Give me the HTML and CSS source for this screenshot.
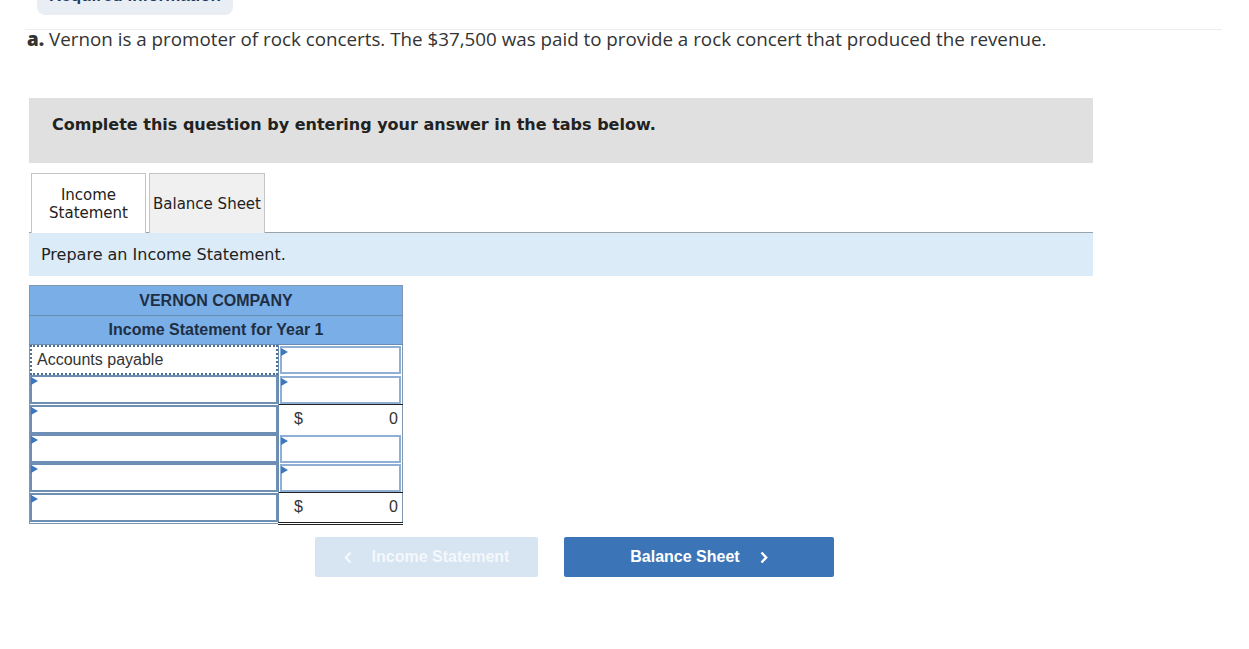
FILE: index.html
```html
<!DOCTYPE html>
<html>
<head>
<meta charset="utf-8">
<link rel="stylesheet" href="styles.css">
</head>
<body>
<div class="page">
  <div class="req-tab"><span>Required information</span></div>
  <div class="rule"></div>
  <p class="question"><b>a.</b> Vernon is a promoter of rock concerts. The $37,500 was paid to provide a rock concert that produced the revenue.</p>

  <div class="main">
    <div class="instructions">Complete this question by entering your answer in the tabs below.</div>

    <div class="tabs">
      <div class="tab active">Income<br>Statement</div>
      <div class="tab">Balance Sheet</div>
    </div>
    <div class="prompt">Prepare an Income Statement.</div>

    <table class="stmt">
      <tr><th colspan="2" class="h1">VERNON COMPANY</th></tr>
      <tr><th colspan="2" class="h2">Income Statement for Year 1</th></tr>
      <tr>
        <td class="lbl"><div class="fixed">Accounts payable</div></td>
        <td class="amt"><div class="box"><i class="tri"></i></div></td>
      </tr>
      <tr>
        <td class="lbl"><div class="box"><i class="tri"></i></div></td>
        <td class="amt"><div class="box"><i class="tri"></i></div></td>
      </tr>
      <tr>
        <td class="lbl"><div class="box"><i class="tri"></i></div></td>
        <td class="amt total"><div class="sum"><span>$</span><span>0</span></div></td>
      </tr>
      <tr>
        <td class="lbl"><div class="box"><i class="tri"></i></div></td>
        <td class="amt"><div class="box"><i class="tri"></i></div></td>
      </tr>
      <tr>
        <td class="lbl"><div class="box"><i class="tri"></i></div></td>
        <td class="amt"><div class="box"><i class="tri"></i></div></td>
      </tr>
      <tr>
        <td class="lbl"><div class="box"><i class="tri"></i></div></td>
        <td class="amt total final"><div class="sum"><span>$</span><span>0</span></div></td>
      </tr>
    </table>

    <div class="nav">
      <div class="btn disabled"><svg class="chev left" width="8" height="13" viewBox="0 0 8 13"><polyline points="6.5,1.5 1.8,6.5 6.5,11.5" fill="none" stroke="#f4f8fc" stroke-width="2.4"/></svg>Income Statement</div>
      <div class="btn primary">Balance Sheet<svg class="chev right" width="8" height="13" viewBox="0 0 8 13"><polyline points="1.5,1.5 6.2,6.5 1.5,11.5" fill="none" stroke="#ffffff" stroke-width="2.4"/></svg></div>
    </div>
  </div>
</div>
</body>
</html>
```
FILE: styles.css
```css
html, body {
  margin: 0;
  padding: 0;
  background: #ffffff;
}
.page {
  width: 1249px;
  height: 649px;
  overflow: hidden;
}
.req-tab {
  margin-left: 37px;
  margin-top: -20px;
  width: 196px;
  height: 35px;
  background: #e9eef5;
  border-radius: 0 0 8px 8px;
  display: flex;
  align-items: flex-end;
  justify-content: center;
  box-sizing: border-box;
  padding-bottom: 9px;
}
.req-tab span {
  font-family: "Liberation Sans", Arial, sans-serif;
  font-weight: bold;
  font-size: 17px;
  color: #1d3b5e;
  line-height: 20px;
}
.rule {
  margin: 14px 0 0 25px;
  width: 1197px;
  height: 1px;
  background: #eeeeee;
}
.question {
  margin: 0 0 0 27px;
  font-family: "Open Sans", sans-serif;
  font-size: 18.8px;
  line-height: 18px;
  color: #333333;
}
.question b {
  font-weight: 800;
}
.main {
  margin-left: 29px;
  width: 1064px;
}
.instructions {
  margin-top: 50px;
  height: 65px;
  background: #e0e0e0;
  box-sizing: border-box;
  padding: 17px 0 0 23px;
  font-family: "DejaVu Sans", Verdana, sans-serif;
  font-weight: bold;
  font-size: 16px;
  color: #222222;
  line-height: 20px;
}
.tabs {
  margin-top: 10px;
  display: flex;
  gap: 3px;
  padding-left: 2px;
  border-bottom: 1px solid #9aa3aa;
  height: 59px;
}
.tab {
  box-sizing: border-box;
  height: 60px;
  width: 116px;
  border: 1px solid #c4c4c4;
  border-bottom: none;
  background: #f0f0f0;
  font-family: "DejaVu Sans", Verdana, sans-serif;
  font-size: 15px;
  line-height: 18px;
  color: #222222;
  display: flex;
  align-items: center;
  justify-content: center;
  text-align: center;
}
.tab.active {
  width: 115px;
  background: #ffffff;
  position: relative;
  z-index: 1;
}
.prompt {
  height: 43px;
  background: #dcebf8;
  box-sizing: border-box;
  padding: 12px 0 0 12px;
  font-family: "DejaVu Sans", Verdana, sans-serif;
  font-size: 16px;
  line-height: 20px;
  color: #222222;
}
.stmt {
  margin-top: 9px;
  border-collapse: collapse;
  width: 374px;
  font-family: "Liberation Sans", Arial, sans-serif;
  border: 1px solid #7f98b0;
}
.stmt th {
  background: #7aaee6;
  color: #1e2e44;
  font-weight: bold;
  font-size: 16px;
  height: 29px;
  padding: 0;
  border-bottom: 1px solid #6a8bb0;
  text-align: center;
}
.stmt th.h2 {
  height: 28px;
}
.stmt td {
  padding: 0;
  height: 29px;
  vertical-align: top;
}
.stmt td.lbl {
  width: 248px;
  border-right: 1px solid #6a8bb0;
}
.box {
  position: relative;
  box-sizing: border-box;
  height: 29px;
  border: 2px solid #6d8fb6;
  background: #ffffff;
}
.amt .box {
  margin: 1px 1px 0 1px;
  height: 28px;
  border: 2px solid #8fafd4;
}
.tri {
  position: absolute;
  left: -1px;
  top: 0;
  width: 0;
  height: 0;
  border-top: 4px solid transparent;
  border-bottom: 4px solid transparent;
  border-left: 7px solid #3c78ba;
}
.fixed {
  box-sizing: border-box;
  height: 30px;
  border: 2px dotted #4d6f96;
  padding: 3px 0 0 5px;
  font-size: 16px;
  color: #333333;
  line-height: 20px;
}
.stmt td.total {
  border-top: 1px solid #222222;
}
.sum {
  display: flex;
  justify-content: space-between;
  padding: 5px 4px 0 15px;
  font-size: 16px;
  color: #333333;
  line-height: 18px;
}
.stmt td.final {
  border-bottom: 3px double #222222;
}
.nav {
  margin-top: 12px;
  display: flex;
  gap: 26px;
  padding-left: 286px;
}
.btn {
  height: 40px;
  border-radius: 2px;
  display: flex;
  align-items: center;
  justify-content: center;
  font-family: "Liberation Sans", Arial, sans-serif;
  font-weight: bold;
  font-size: 16px;
  color: #ffffff;
  box-sizing: border-box;
}
.btn.disabled {
  width: 223px;
  background: #d7e4f1;
  color: #f4f8fc;
}
.btn.primary {
  width: 270px;
  background: #3b75b7;
}
.chev.left {
  margin-right: 20px;
}
.chev.right {
  margin-left: 20px;
}
```
